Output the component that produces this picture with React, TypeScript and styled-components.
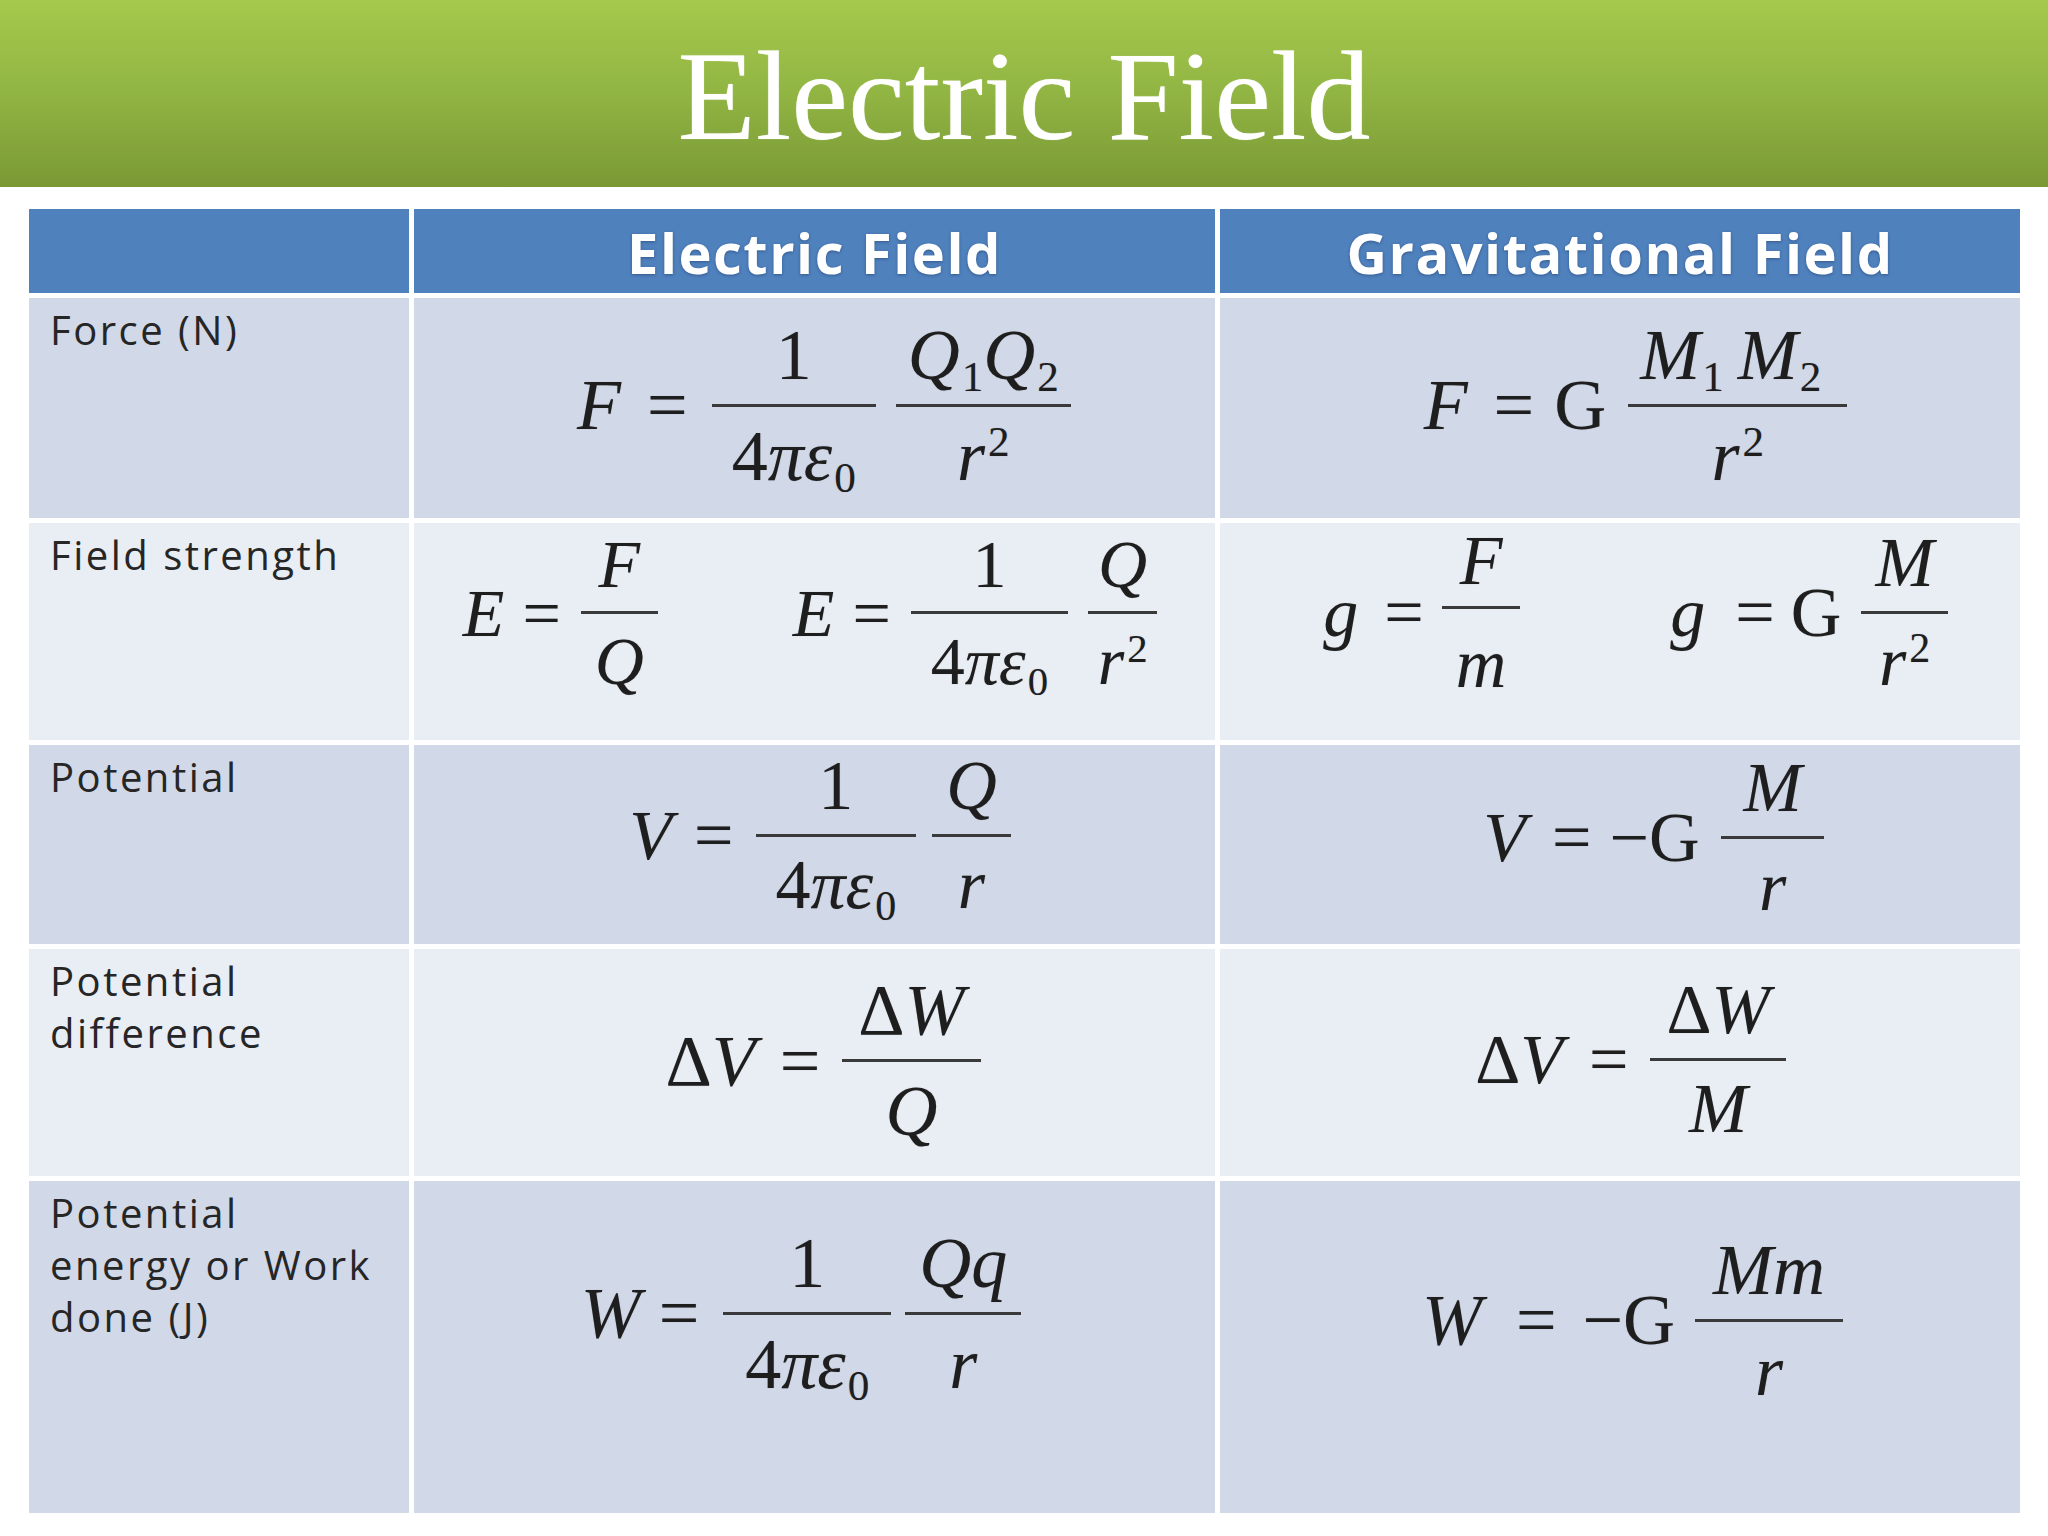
import React from "react";
import styled, { createGlobalStyle } from "styled-components";

const Global = createGlobalStyle`
  html, body { margin: 0; padding: 0; background: #ffffff; }
  body { width: 2048px; height: 1536px; overflow: hidden; }
`;

const Page = styled.div`
  width: 2048px;
  height: 1536px;
  display: flex;
  flex-direction: column;
  background: #ffffff;
`;

const TitleBar = styled.header`
  height: 187px;
  flex: none;
  display: flex;
  align-items: center;
  justify-content: center;
  padding-top: 6px;
  box-sizing: border-box;
  background: linear-gradient(180deg, #a5c94b 0%, #93b744 45%, #7a9935 100%);
`;

const Title = styled.h1`
  margin: 0;
  font-family: "Liberation Serif", "Times New Roman", serif;
  font-weight: 400;
  font-size: 128px;
  line-height: 1.1;
  color: #ffffff;
  text-shadow: 0 0 1px rgba(255, 255, 255, 0.6);
`;

const Table = styled.div`
  margin: 22px 0 0 29px;
  width: 1991px;
  display: grid;
  grid-template-columns: 380px 801px 800px;
  grid-template-rows: 84px 220px 217px 199px 227px 332px;
  column-gap: 5px;
  row-gap: 5px;
  background: #ffffff;
`;

const HeadCell = styled.div`
  background: #4f81bd;
  display: flex;
  align-items: center;
  justify-content: center;
  font-family: "Open Sans", "DejaVu Sans", sans-serif;
  font-weight: 700;
  font-size: 56px;
  letter-spacing: 1.5px;
  color: #ffffff;
  text-shadow: 0 1px 3px rgba(20, 40, 80, 0.45);
  padding-top: 2px;
  white-space: nowrap;
`;

const Cell = styled.div<{ $band: 1 | 2 }>`
  background: ${(p) => (p.$band === 1 ? "#d1d8e8" : "#e9edf4")};
  box-sizing: border-box;
`;

const LabelCell = styled(Cell)`
  padding: 6px 8px 0 21px;
  font-family: "Open Sans", "DejaVu Sans", sans-serif;
  font-size: 40px;
  line-height: 52px;
  letter-spacing: 2.5px;
  color: #262626;
`;

const MathCell = styled(Cell)<{ $lift: number; $nudge?: number; $gap?: number }>`
  display: flex;
  align-items: center;
  justify-content: center;
  gap: ${(p) => p.$gap ?? 0}px;
  padding-bottom: ${(p) => p.$lift * 2}px;
  padding-left: ${(p) => Math.max(0, p.$nudge ?? 0)}px;
  padding-right: ${(p) => Math.max(0, -(p.$nudge ?? 0))}px;
`;

const Formula = styled.div<{ $size: number }>`
  display: inline-flex;
  align-items: center;
  font-family: "Liberation Serif", "Times New Roman", serif;
  font-size: ${(p) => p.$size}px;
  line-height: 1;
  color: #1e1e1e;
  white-space: nowrap;
  text-shadow: 0 0 1px rgba(0, 0, 0, 0.25);
`;

const I = styled.span`
  font-style: italic;
`;

const R = styled.span`
  font-style: normal;
`;

const Op = styled.span<{ $l?: number; $r?: number }>`
  font-style: normal;
  margin-left: ${(p) => p.$l ?? 20}px;
  margin-right: ${(p) => p.$r ?? 20}px;
`;

const Sub = styled.span<{ $gap?: number }>`
  font-style: normal;
  font-size: 0.6em;
  line-height: 0;
  vertical-align: -0.28em;
  margin-left: 2px;
  margin-right: ${(p) => p.$gap ?? 0}px;
`;

const Sup = styled.span`
  font-style: normal;
  font-size: 0.6em;
  line-height: 0;
  vertical-align: 0.55em;
  margin-left: 3px;
`;

const Frac = styled.span<{ $ml?: number }>`
  display: inline-flex;
  flex-direction: column;
  align-items: center;
  margin-left: ${(p) => p.$ml ?? 0}px;
`;

const Part = styled.span<{ $px?: number; $pr?: number }>`
  display: block;
  line-height: 1;
  padding-left: ${(p) => p.$px ?? 8}px;
  padding-right: ${(p) => p.$pr ?? p.$px ?? 8}px;
`;

const Bar = styled.span<{ $top?: number; $bottom?: number }>`
  align-self: stretch;
  height: 3px;
  background: #3a3a3a;
  margin-top: ${(p) => p.$top ?? 13}px;
  margin-bottom: ${(p) => p.$bottom ?? 13}px;
`;

const OneOverFourPiEps = ({ pad = 10 }: { pad?: number }) => (
  <Frac>
    <Part $px={pad}>
      <R>1</R>
    </Part>
    <Bar />
    <Part $px={pad}>
      <R>4</R>
      <I>πε</I>
      <Sub>0</Sub>
    </Part>
  </Frac>
);

export default function App() {
  return (
    <Page>
      <Global />
      <TitleBar>
        <Title>Electric Field</Title>
      </TitleBar>
      <Table>
        <HeadCell />
        <HeadCell>Electric Field</HeadCell>
        <HeadCell>Gravitational Field</HeadCell>

        {/* Force */}
        <LabelCell $band={1}>Force (N)</LabelCell>
        <MathCell $band={1} $lift={3} $nudge={19}>
          <Formula $size={72}>
            <I>F</I>
            <Op $l={26} $r={24}>=</Op>
            <OneOverFourPiEps pad={20} />
            <Frac $ml={20}>
              <Part $px={12}>
                <I>Q</I>
                <Sub>1</Sub>
                <I>Q</I>
                <Sub>2</Sub>
              </Part>
              <Bar />
              <Part>
                <I>r</I>
                <Sup>2</Sup>
              </Part>
            </Frac>
          </Formula>
        </MathCell>
        <MathCell $band={1} $lift={3} $nudge={31}>
          <Formula $size={72}>
            <I>F</I>
            <Op $l={26} $r={20}>=</Op>
            <R>G</R>
            <Frac $ml={22}>
              <Part $px={12} $pr={26}>
                <I>M</I>
                <Sub $gap={14}>1</Sub>
                <I>M</I>
                <Sub>2</Sub>
              </Part>
              <Bar />
              <Part>
                <I>r</I>
                <Sup>2</Sup>
              </Part>
            </Frac>
          </Formula>
        </MathCell>

        {/* Field strength */}
        <LabelCell $band={2}>Field strength</LabelCell>
        <MathCell $band={2} $lift={19} $gap={135} $nudge={-9}>
          <Formula $size={68}>
            <I>E</I>
            <Op $l={18} $r={20}>=</Op>
            <Frac>
              <Part $px={14}>
                <I>F</I>
              </Part>
              <Bar />
              <Part $px={14}>
                <I>Q</I>
              </Part>
            </Frac>
          </Formula>
          <Formula $size={68}>
            <I>E</I>
            <Op $l={18} $r={20}>=</Op>
            <OneOverFourPiEps pad={20} />
            <Frac $ml={20}>
              <Part $px={10}>
                <I>Q</I>
              </Part>
              <Bar />
              <Part>
                <I>r</I>
                <Sup>2</Sup>
              </Part>
            </Frac>
          </Formula>
        </MathCell>
        <MathCell $band={2} $lift={19} $gap={150} $nudge={31}>
          <Formula $size={70}>
            <I>g</I>
            <Op $l={26} $r={18}>=</Op>
            <Frac>
              <Part $px={14}>
                <I>F</I>
              </Part>
              <Bar $top={10} $bottom={20} />
              <Part $px={14}>
                <I>m</I>
              </Part>
            </Frac>
          </Formula>
          <Formula $size={70}>
            <I>g</I>
            <Op $l={30} $r={16}>=</Op>
            <R>G</R>
            <Frac $ml={20}>
              <Part $px={14}>
                <I>M</I>
              </Part>
              <Bar />
              <Part>
                <I>r</I>
                <Sup>2</Sup>
              </Part>
            </Frac>
          </Formula>
        </MathCell>

        {/* Potential */}
        <LabelCell $band={1}>Potential</LabelCell>
        <MathCell $band={1} $lift={9} $nudge={11}>
          <Formula $size={70}>
            <I>V</I>
            <Op $l={22} $r={22}>=</Op>
            <OneOverFourPiEps pad={20} />
            <Frac $ml={16}>
              <Part $px={14}>
                <I>Q</I>
              </Part>
              <Bar />
              <Part $px={14}>
                <I>r</I>
              </Part>
            </Frac>
          </Formula>
        </MathCell>
        <MathCell $band={1} $lift={7} $nudge={67}>
          <Formula $size={70}>
            <I>V</I>
            <Op $l={26} $r={18}>=</Op>
            <R>−</R>
            <R>G</R>
            <Frac $ml={22}>
              <Part $px={22}>
                <I>M</I>
              </Part>
              <Bar />
              <Part $px={22}>
                <I>r</I>
              </Part>
            </Frac>
          </Formula>
        </MathCell>

        {/* Potential difference */}
        <LabelCell $band={2}>
          Potential
          <br />
          difference
        </LabelCell>
        <MathCell $band={2} $lift={2} $nudge={17}>
          <Formula $size={72}>
            <R>Δ</R>
            <I>V</I>
            <Op $l={24} $r={22}>=</Op>
            <Frac>
              <Part $px={16}>
                <R>Δ</R>
                <I>W</I>
              </Part>
              <Bar />
              <Part $px={16}>
                <I>Q</I>
              </Part>
            </Frac>
          </Formula>
        </MathCell>
        <MathCell $band={2} $lift={3} $nudge={21}>
          <Formula $size={70}>
            <R>Δ</R>
            <I>V</I>
            <Op $l={26} $r={22}>=</Op>
            <Frac>
              <Part $px={16}>
                <R>Δ</R>
                <I>W</I>
              </Part>
              <Bar />
              <Part $px={16}>
                <I>M</I>
              </Part>
            </Frac>
          </Formula>
        </MathCell>

        {/* Potential energy */}
        <LabelCell $band={1}>
          Potential
          <br />
          energy or Work
          <br />
          done (J)
        </LabelCell>
        <MathCell $band={1} $lift={34} $nudge={-27}>
          <Formula $size={72}>
            <I>W</I>
            <Op $l={18} $r={24}>=</Op>
            <OneOverFourPiEps pad={22} />
            <Frac $ml={14}>
              <Part $px={14}>
                <I>Qq</I>
              </Part>
              <Bar />
              <Part $px={14}>
                <I>r</I>
              </Part>
            </Frac>
          </Formula>
        </MathCell>
        <MathCell $band={1} $lift={27} $nudge={25}>
          <Formula $size={72}>
            <I>W</I>
            <Op $l={34} $r={26}>=</Op>
            <R>−</R>
            <R>G</R>
            <Frac $ml={20}>
              <Part $px={18}>
                <I>Mm</I>
              </Part>
              <Bar />
              <Part $px={18}>
                <I>r</I>
              </Part>
            </Frac>
          </Formula>
        </MathCell>
      </Table>
    </Page>
  );
}
